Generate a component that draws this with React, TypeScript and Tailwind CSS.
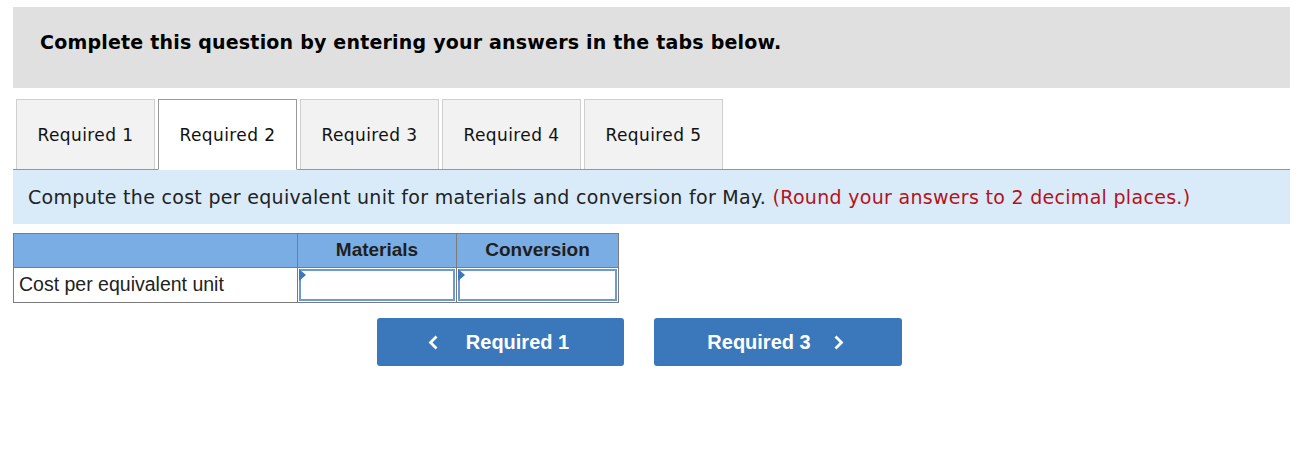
const TABS = ['Required 1', 'Required 2', 'Required 3', 'Required 4', 'Required 5']
const ACTIVE = 1

function Chevron({ dir }: { dir: 'left' | 'right' }) {
  return (
    <svg width="11" height="15" viewBox="0 0 11 15" className="shrink-0">
      <polyline
        points={dir === 'left' ? '8.5,1.5 2.5,7.5 8.5,13.5' : '2.5,1.5 8.5,7.5 2.5,13.5'}
        fill="none"
        stroke="white"
        strokeWidth="2.8"
      />
    </svg>
  )
}

function AnswerCell() {
  return (
    <td className="relative h-[35px] border border-[#7b7b7b] bg-white p-0">
      <div className="absolute inset-[1px] border-2 border-[#6c9bd2]" />
      <span className="absolute left-[1px] top-[1px] h-0 w-0 border-y-[6px] border-l-[7px] border-y-transparent border-l-[#3a78bb]" />
    </td>
  )
}

export default function App() {
  return (
    <div className="w-[1302px] h-[460px] bg-white pt-[7px] pl-[13px] pr-[12px]">
      {/* Banner */}
      <div className="h-[81px] bg-[#e0e0e0] pl-[27px] pt-[21px] font-['Verdana','DejaVu_Sans',sans-serif] text-[19px] tracking-[0.2px] font-bold text-black">
        Complete this question by entering your answers in the tabs below.
      </div>

      {/* Tabs */}
      <div className="mt-[11px] flex h-[71px] items-end gap-[3px] border-b border-[#8e98a0] pl-[3px]">
        {TABS.map((tab, i) => (
          <div
            key={tab}
            className={`flex w-[139px] items-center justify-center border pt-[3px] font-['Verdana','DejaVu_Sans',sans-serif] text-[17px] tracking-[0.4px] text-[#111] ${
              i === ACTIVE ? 'h-[71px] -mb-px border-[#999] border-b-white bg-white' : 'h-[70px] border-[#cfcfcf] border-b-0 bg-[#f2f2f2]'
            }`}
          >
            {tab}
          </div>
        ))}
      </div>

      {/* Instructions */}
      <div className="flex h-[54px] items-center bg-[#d9ebf8] pl-[15px] font-['Verdana','DejaVu_Sans',sans-serif] text-[19px] tracking-[0.3px] text-[#222]">
        <span>
          Compute the cost per equivalent unit for materials and conversion for May.{' '}
          <span className="text-[#b5121b]">(Round your answers to 2 decimal places.)</span>
        </span>
      </div>

      {/* Table */}
      <table className="mt-[9px] border-collapse font-['Liberation_Sans',Arial,sans-serif]">
        <thead>
          <tr className="h-[34px] bg-[#7aade3] text-[19px] font-bold text-[#1f1f1f]">
            <th className="w-[284px] border border-[#7b7b7b]" />
            <th className="w-[159px] border border-[#7b7b7b]">Materials</th>
            <th className="w-[162px] border border-[#7b7b7b]">Conversion</th>
          </tr>
        </thead>
        <tbody>
          <tr>
            <td className="h-[35px] border border-[#7b7b7b] pl-[5px] text-[19.5px] text-[#222]">
              Cost per equivalent unit
            </td>
            <AnswerCell />
            <AnswerCell />
          </tr>
        </tbody>
      </table>

      {/* Navigation */}
      <div className="mt-[15px] flex gap-[30px] pl-[364px] font-['Liberation_Sans',Arial,sans-serif]">
        <button className="flex h-[48px] w-[247px] items-center justify-center gap-[27px] rounded-[3px] bg-[#3a78bb] pr-[4px] text-[20px] font-bold text-white">
          <Chevron dir="left" />
          Required 1
        </button>
        <button className="flex h-[48px] w-[248px] items-center justify-center gap-[22px] rounded-[3px] bg-[#3a78bb] pr-[5px] text-[20px] font-bold text-white">
          Required 3
          <Chevron dir="right" />
        </button>
      </div>
    </div>
  )
}
